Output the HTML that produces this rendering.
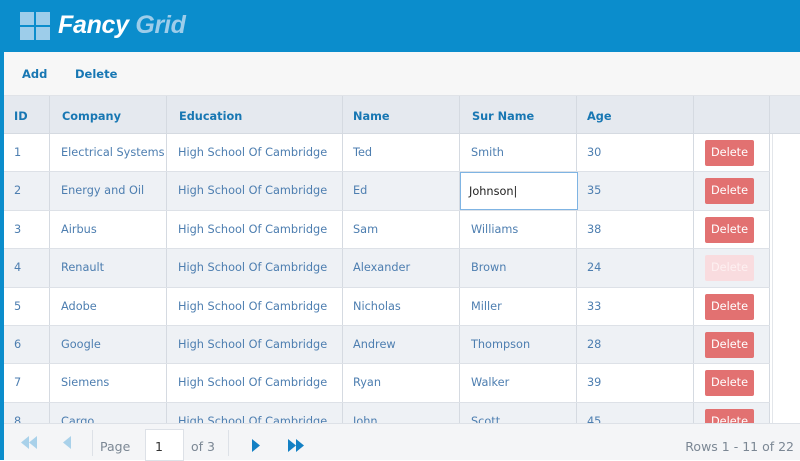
<!DOCTYPE html>
<html><head><style>
*{margin:0;padding:0;box-sizing:border-box}
body{width:800px;height:460px;overflow:hidden;background:#fff;font-family:"DejaVu Sans","Liberation Sans",sans-serif;position:relative}
.hdr{position:absolute;left:0;top:0;width:800px;height:52px;background:#0b8dcc}
.logo{position:absolute;left:20px;top:12px;width:32px;height:28px}
.logo i{position:absolute;width:14px;height:13px;background:#9dcdea}
.brand{position:absolute;left:58px;top:11px;font:italic bold 25px "Liberation Sans",sans-serif;color:#fff;letter-spacing:-0.3px}
.brand span{color:#9dcdea}
.lb{position:absolute;left:0;top:52px;width:4px;height:408px;background:#0b8dcc}
.tb{position:absolute;left:4px;top:52px;width:796px;height:44px;background:#f7f7f7;border-bottom:1px solid #e0e3e8}
.tb b{position:absolute;top:15px;font-size:11.5px;color:#1877b3}
.gh{position:absolute;left:4px;top:96px;width:796px;height:38px;background:#e5e9ef;border-bottom:1px solid #d5dae1}
.cell{position:absolute;height:100%;border-right:1px solid #d5dae1;font-size:11.3px;padding-left:10px;line-height:38px;white-space:nowrap;overflow:hidden}
.gh .cell{font-weight:bold;color:#1877b3;line-height:42px}
.row{position:absolute;left:4px;width:766px;height:38.4px;border-bottom:1px solid #dde1e7;color:#4d7eb0}
.row.alt{background:#eef1f5}
.btn{position:absolute;left:11px;top:6px;width:49px;height:26px;background:#e27171;color:#fff;border-radius:2px;font-size:11.3px;line-height:26px;text-align:center;padding:0}
.ed{position:absolute;border:1px solid #7fb4e3;background:#fff;color:#222;padding-left:8px}
.ft{position:absolute;left:4px;top:423px;width:796px;height:37px;background:#f4f5f7;border-top:1px solid #dde1e7;font-size:12.5px;color:#7b8794}
.sep{position:absolute;top:6px;width:1px;height:26px;background:#dde1e7}
</style></head><body>
<div class="hdr">
<div class="logo"><i style="left:0;top:0"></i><i style="left:16px;top:0"></i><i style="left:0;top:15px"></i><i style="left:16px;top:15px"></i></div>
<div class="brand">Fancy <span>Grid</span></div>
</div>
<div class="lb"></div>
<div class="tb"><b style="left:18px">Add</b><b style="left:71px">Delete</b></div>
<div class="gh">
<div class="cell" style="left:0;width:46px">ID</div>
<div class="cell" style="left:46px;width:117px;padding-left:12px">Company</div>
<div class="cell" style="left:163px;width:176px;padding-left:12px">Education</div>
<div class="cell" style="left:339px;width:117px">Name</div>
<div class="cell" style="left:456px;width:117px;padding-left:12px">Sur Name</div>
<div class="cell" style="left:573px;width:117px">Age</div>
<div class="cell" style="left:690px;width:76px"></div>
</div>
<div style="position:absolute;left:772px;top:134px;width:1px;height:289px;background:#e3e6ea"></div>
<div class="row" style="top:134px"><div class="cell" style="left:0;width:46px">1</div><div class="cell" style="left:46px;width:117px;padding-left:11px">Electrical Systems</div><div class="cell" style="left:163px;width:176px;padding-left:11px">High School Of Cambridge</div><div class="cell" style="left:339px;width:117px">Ted</div><div class="cell" style="left:456px;width:117px;padding-left:11px">Smith</div><div class="cell" style="left:573px;width:117px">30</div><div class="cell" style="left:690px;width:76px"><div class="btn">Delete</div></div></div>
<div class="row alt" style="top:172.4px"><div class="cell" style="left:0;width:46px">2</div><div class="cell" style="left:46px;width:117px;padding-left:11px">Energy and Oil</div><div class="cell" style="left:163px;width:176px;padding-left:11px">High School Of Cambridge</div><div class="cell" style="left:339px;width:117px">Ed</div><div class="cell ed" style="left:456px;width:118px">Johnson|</div><div class="cell" style="left:573px;width:117px">35</div><div class="cell" style="left:690px;width:76px"><div class="btn">Delete</div></div></div>
<div class="row" style="top:210.8px"><div class="cell" style="left:0;width:46px">3</div><div class="cell" style="left:46px;width:117px;padding-left:11px">Airbus</div><div class="cell" style="left:163px;width:176px;padding-left:11px">High School Of Cambridge</div><div class="cell" style="left:339px;width:117px">Sam</div><div class="cell" style="left:456px;width:117px;padding-left:11px">Williams</div><div class="cell" style="left:573px;width:117px">38</div><div class="cell" style="left:690px;width:76px"><div class="btn">Delete</div></div></div>
<div class="row alt" style="top:249.2px"><div class="cell" style="left:0;width:46px">4</div><div class="cell" style="left:46px;width:117px;padding-left:11px">Renault</div><div class="cell" style="left:163px;width:176px;padding-left:11px">High School Of Cambridge</div><div class="cell" style="left:339px;width:117px">Alexander</div><div class="cell" style="left:456px;width:117px;padding-left:11px">Brown</div><div class="cell" style="left:573px;width:117px">24</div><div class="cell" style="left:690px;width:76px"><div class="btn" style="background:#f9dcdf;color:#fdf0f1">Delete</div></div></div>
<div class="row" style="top:287.6px"><div class="cell" style="left:0;width:46px">5</div><div class="cell" style="left:46px;width:117px;padding-left:11px">Adobe</div><div class="cell" style="left:163px;width:176px;padding-left:11px">High School Of Cambridge</div><div class="cell" style="left:339px;width:117px">Nicholas</div><div class="cell" style="left:456px;width:117px;padding-left:11px">Miller</div><div class="cell" style="left:573px;width:117px">33</div><div class="cell" style="left:690px;width:76px"><div class="btn">Delete</div></div></div>
<div class="row alt" style="top:326px"><div class="cell" style="left:0;width:46px">6</div><div class="cell" style="left:46px;width:117px;padding-left:11px">Google</div><div class="cell" style="left:163px;width:176px;padding-left:11px">High School Of Cambridge</div><div class="cell" style="left:339px;width:117px">Andrew</div><div class="cell" style="left:456px;width:117px;padding-left:11px">Thompson</div><div class="cell" style="left:573px;width:117px">28</div><div class="cell" style="left:690px;width:76px"><div class="btn">Delete</div></div></div>
<div class="row" style="top:364.4px"><div class="cell" style="left:0;width:46px">7</div><div class="cell" style="left:46px;width:117px;padding-left:11px">Siemens</div><div class="cell" style="left:163px;width:176px;padding-left:11px">High School Of Cambridge</div><div class="cell" style="left:339px;width:117px">Ryan</div><div class="cell" style="left:456px;width:117px;padding-left:11px">Walker</div><div class="cell" style="left:573px;width:117px">39</div><div class="cell" style="left:690px;width:76px"><div class="btn">Delete</div></div></div>
<div class="row alt" style="top:402.8px"><div class="cell" style="left:0;width:46px">8</div><div class="cell" style="left:46px;width:117px;padding-left:11px">Cargo</div><div class="cell" style="left:163px;width:176px;padding-left:11px">High School Of Cambridge</div><div class="cell" style="left:339px;width:117px">John</div><div class="cell" style="left:456px;width:117px;padding-left:11px">Scott</div><div class="cell" style="left:573px;width:117px">45</div><div class="cell" style="left:690px;width:76px"><div class="btn">Delete</div></div></div>
<div class="ft">
<svg style="position:absolute;left:16px;top:12px" width="18" height="13"><path d="M9 0L1 6.5L9 13ZM17 0L9 6.5L17 13Z" fill="#a9d1ea"/></svg>
<svg style="position:absolute;left:58px;top:12px" width="10" height="13"><path d="M9 0L1 6.5L9 13Z" fill="#a9d1ea"/></svg>
<div class="sep" style="left:88px"></div>
<span style="position:absolute;left:96px;top:15px">Page</span>
<div style="position:absolute;left:141px;top:5px;width:39px;height:32px;background:#fff;border:1px solid #dde1e7;padding:9px 0 0 9px;color:#333">1</div>
<span style="position:absolute;left:187px;top:15px">of 3</span>
<div class="sep" style="left:224px"></div>
<svg style="position:absolute;left:247px;top:15px" width="10" height="13"><path d="M1 0L9 6.5L1 13Z" fill="#1380c4"/></svg>
<svg style="position:absolute;left:283px;top:15px" width="18" height="13"><path d="M1 0L9 6.5L1 13ZM9 0L17 6.5L9 13Z" fill="#1380c4"/></svg>
<span style="position:absolute;right:6px;top:15px">Rows 1 - 11 of 22</span>
</div>
</body></html>
